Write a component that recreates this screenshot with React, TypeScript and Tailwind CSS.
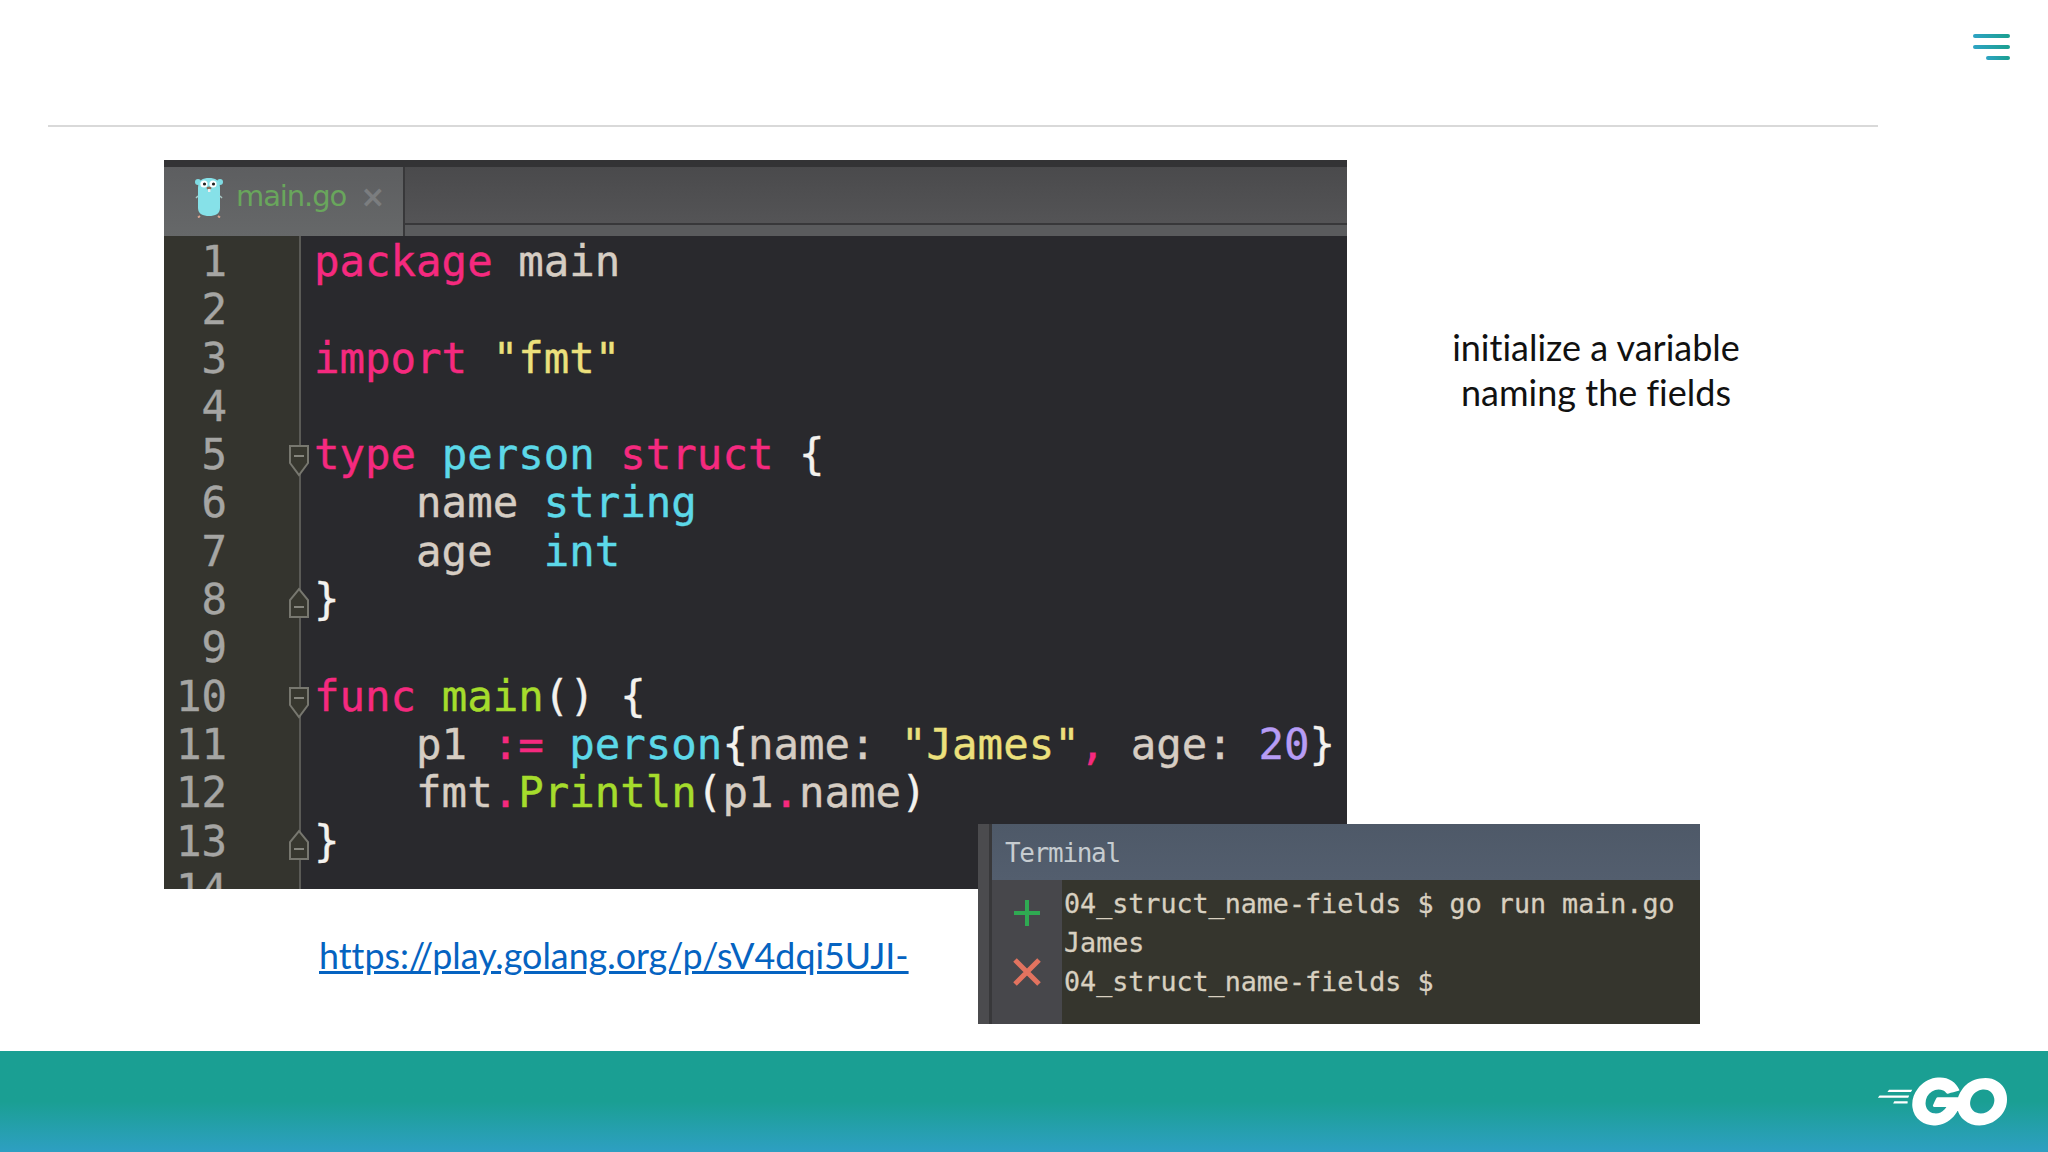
import { SiGo } from "react-icons/si";

const P = "text-[#f5297f]";
const C = "text-[#5cd8e8]";
const G = "text-[#a5dc2c]";
const Y = "text-[#ece07c]";
const V = "text-[#b79cf5]";
const W = "text-[#f4f2ee]";

type Seg = [string, string?];
const rows: { s: Seg[]; fold?: "down" | "up" }[] = [
  { s: [["package", P], [" main"]] },
  { s: [] },
  { s: [["import", P], [" "], ['"fmt"', Y]] },
  { s: [] },
  { s: [["type", P], [" "], ["person", C], [" "], ["struct", P], [" "], ["{", W]], fold: "down" },
  { s: [["    name "], ["string", C]] },
  { s: [["    age  "], ["int", C]] },
  { s: [["}", W]], fold: "up" },
  { s: [] },
  { s: [["func", P], [" "], ["main", G], ["()", W], [" "], ["{", W]], fold: "down" },
  { s: [["    p1 "], [":=", P], [" "], ["person", C], ["{", W], ["name: "], ['"James"', Y], [",", P], [" age: "], ["20", V], ["}", W]] },
  { s: [["    fmt"], [".", P], ["Println", G], ["(", W], ["p1"], [".", P], ["name"], [")", W]] },
  { s: [["}", W]], fold: "up" },
  { s: [] },
];

function Fold({ dir }: { dir: "down" | "up" }) {
  return (
    <svg viewBox="0 0 24 36" className="absolute right-[-13px] top-[11px] w-[26px] h-[36px]">
      {dir === "down" ? (
        <path d="M3 4H21V21L12 33L3 21Z" fill="#37372f" stroke="#77776f" strokeWidth="2" />
      ) : (
        <path d="M3 30H21V13L12 2L3 13Z" fill="#37372f" stroke="#77776f" strokeWidth="2" />
      )}
      <path d={dir === "down" ? "M7 14H17" : "M7 20H17"} stroke="#85857d" strokeWidth="2" />
    </svg>
  );
}

function Gopher() {
  return (
    <svg viewBox="0 0 30 42" className="w-[30px] h-[42px] shrink-0">
      <circle cx="4" cy="6" r="3" fill="#7fdbe3" />
      <circle cx="26" cy="6" r="3" fill="#7fdbe3" />
      <path d="M4 12C4 4 9 2 15 2C21 2 26 4 26 12V32C26 38 21 40 15 40C9 40 4 38 4 32Z" fill="#86e1e8" />
      <circle cx="10" cy="8" r="3.6" fill="#fff" />
      <circle cx="19" cy="8" r="3.6" fill="#fff" />
      <circle cx="10.5" cy="8" r="1.6" fill="#222" />
      <circle cx="19.5" cy="8" r="1.6" fill="#222" />
      <ellipse cx="15" cy="12" rx="2.5" ry="1.6" fill="#8a6a55" />
      <rect x="14" y="13" width="2.4" height="3" fill="#eee" />
      <path d="M6 40L4 41.5M24 40L26 41.5" stroke="#d9a48f" strokeWidth="2" />
      <path d="M4 20L2 22M26 20L28 22" stroke="#a9c9c6" strokeWidth="1.5" />
    </svg>
  );
}

export default function App() {
  const mono = "font-['DejaVu_Sans_Mono',monospace]";
  return (
    <div className="w-full h-[1152px] flex flex-col bg-white overflow-hidden font-['Lato',sans-serif] [font-variant-ligatures:none]">
      <header className="h-[125px] shrink-0 flex flex-col items-end gap-[7px] pt-[34px] pr-[38px]">
        <div className="w-[37px] h-[4px] rounded-full bg-gradient-to-r from-[#2ea3c4] to-[#1a9f8f]" />
        <div className="w-[37px] h-[4px] rounded-full bg-gradient-to-r from-[#2ea3c4] to-[#1a9f8f]" />
        <div className="w-[24px] h-[4px] rounded-full bg-gradient-to-r from-[#2ea3c4] to-[#1a9f8f]" />
      </header>
      <div className="h-[2px] w-[1830px] ml-[48px] bg-[#d9d9d9] shrink-0" />

      <main className="relative flex-1 flex flex-col min-h-0">
        <div className="flex items-start">
          <section className={`ml-[164px] mt-[33px] w-[1183px] h-[729px] flex flex-col overflow-hidden bg-[#29292d] shrink-0 ${mono}`}>
            <div className="h-[76px] shrink-0 flex flex-col bg-[#3a3a3c]">
              <div className="h-[7px] shrink-0 bg-[#333335]" />
              <div className="flex-1 flex bg-[#58595b]">
                <div className="w-[241px] shrink-0 flex items-center pl-[30px] pb-[10px] bg-gradient-to-b from-[#5d5e60] to-[#666869] border-r-2 border-[#38383a]">
                  <Gopher />
                  <span className="ml-[12px] text-[29px] leading-none text-[#69a65c] font-['DejaVu_Sans',sans-serif] tracking-[-1.1px]">main.go</span>
                  <span className="ml-[14px] text-[30px] leading-none text-[#7b7d7f] font-['DejaVu_Sans',sans-serif] font-bold">×</span>
                </div>
                <div className="flex-1 flex flex-col">
                  <div className="h-[58px] bg-gradient-to-b from-[#4a4a4c] to-[#545456] border-b-2 border-[#38383a]" />
                  <div className="flex-1 bg-[#5a5b5d]" />
                </div>
              </div>
            </div>
            <div className="flex flex-1 min-h-0 [-webkit-text-stroke:0.4px]">
              <div className="w-[137px] shrink-0 bg-[#34342e] border-r-2 border-[#5a5a56] relative flex flex-col pt-[2px]">
                {rows.map((r, i) => (
                  <div key={i} className="relative h-[48.3px] shrink-0 pr-[72px] text-right text-[42.4px] leading-[48.3px] text-[#a5a5a3]">
                    {i + 1}
                    {r.fold && <Fold dir={r.fold} />}
                  </div>
                ))}
              </div>
              <div className="flex flex-col pt-[2px] pl-[13px] text-[42.4px] leading-[48.3px] text-[#d6cdc3]">
                {rows.map((r, i) => (
                  <div key={i} className="h-[48.3px] shrink-0 whitespace-pre">
                    {r.s.map(([t, c], j) => (
                      <span key={j} className={c}>{t}</span>
                    ))}
                  </div>
                ))}
              </div>
            </div>
          </section>
          <p className="w-[400px] ml-[49px] mt-[198px] text-center text-[36px] leading-[45px] text-[#111]">
            initialize a variable
            <br />
            naming the fields
          </p>
        </div>
        <a className="ml-[319px] mt-[45px] text-[35.8px] leading-[44px] text-[#0563c1] underline self-start">
          https://play.golang.org/p/sV4dqi5UJI-
        </a>

        <section className={`absolute left-[978px] top-[697px] w-[722px] h-[200px] flex bg-[#35352d] ${mono}`}>
          <div className="w-[14px] bg-[#4b4b4e] border-r-[3px] border-[#38383a] shrink-0" />
          <div className="flex-1 flex flex-col">
            <div className="h-[56px] shrink-0 bg-gradient-to-b from-[#4e5968] to-[#535e6e] flex items-center pl-[13px] pt-[3px] text-[26px] text-[#c6ccd0] tracking-[-1.3px]">
              Terminal
            </div>
            <div className="flex-1 flex">
              <div className="w-[70px] shrink-0 bg-[#47474b] flex flex-col items-center pt-[17px] gap-[27px]">
                <svg viewBox="0 0 32 32" className="w-[32px] h-[32px]">
                  <path d="M16 3V29M3 16H29" stroke="#2faa52" strokeWidth="4" />
                </svg>
                <svg viewBox="0 0 32 32" className="w-[32px] h-[32px]">
                  <path d="M4 4L28 28M28 4L4 28" stroke="#e2735f" strokeWidth="5" />
                </svg>
              </div>
              <div className="flex-1 pl-[2px] pt-[4px] text-[26.7px] leading-[39px] text-[#d8d0c0] whitespace-pre [-webkit-text-stroke:0.3px]">
                <div>04_struct_name-fields $ go run main.go</div>
                <div>James</div>
                <div>04_struct_name-fields $</div>
              </div>
            </div>
          </div>
        </section>
      </main>

      <footer className="h-[101px] shrink-0 flex items-center justify-end pr-[41px] bg-gradient-to-b from-[#1a9f93] from-50% to-[#2e9fc2]">
        <SiGo className="text-white w-[129px] h-[129px]" />
      </footer>
    </div>
  );
}
